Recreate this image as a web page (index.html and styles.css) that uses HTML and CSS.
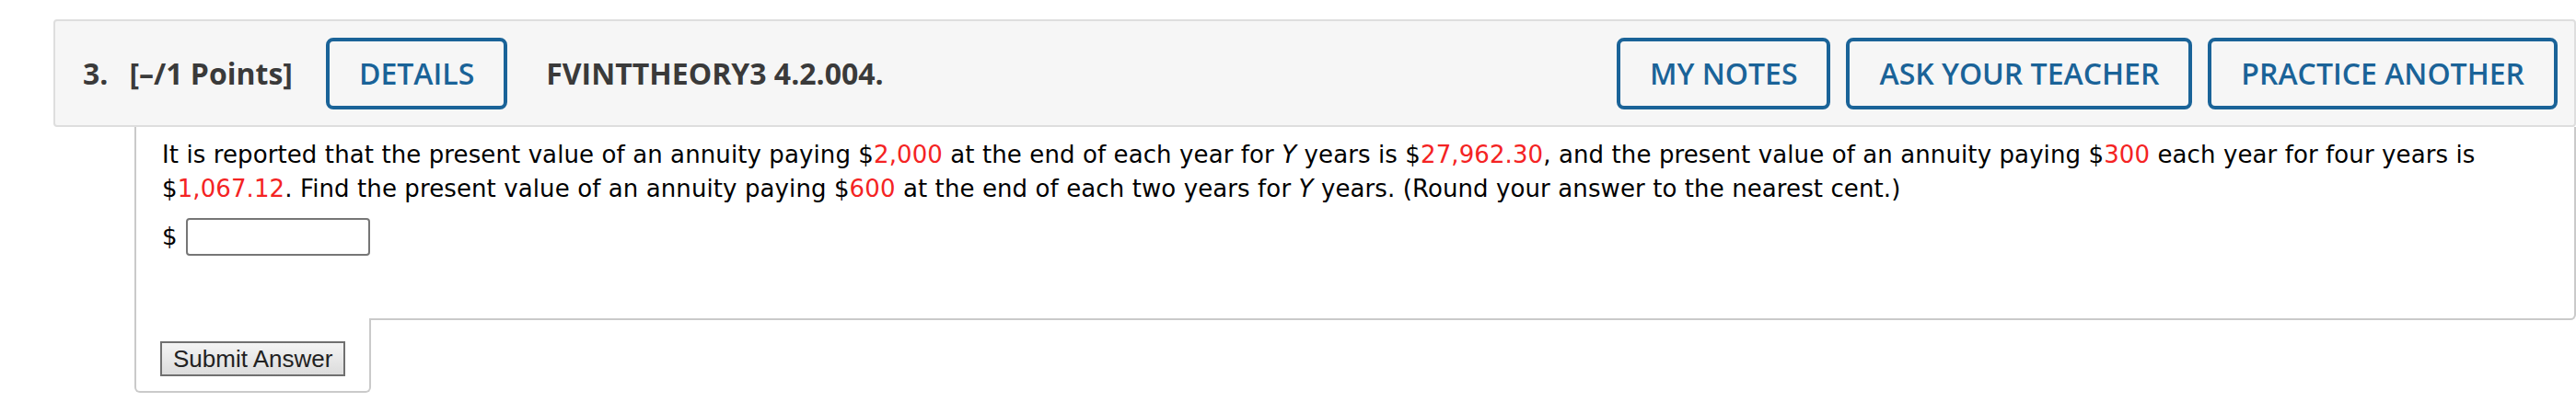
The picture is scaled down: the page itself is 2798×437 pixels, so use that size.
FILE: index.html
```html
<!DOCTYPE html>
<html>
<head>
<meta charset="utf-8">
<link rel="stylesheet" href="styles.css">
</head>
<body>
<div class="page">
  <div class="qhead">
    <span class="qnum">3.</span>
    <span class="qpts">[–/1 Points]</span>
    <button class="hbtn">DETAILS</button>
    <span class="qtitle">FVINTTHEORY3 4.2.004.</span>
    <div class="hright">
      <button class="hbtn">MY NOTES</button>
      <button class="hbtn">ASK YOUR TEACHER</button>
      <button class="hbtn">PRACTICE ANOTHER</button>
    </div>
  </div>
  <div class="qbody">
    <p class="qtext">It is reported that the present value of an annuity paying $<span class="red">2,000</span> at the end of each year for <i>Y</i> years is $<span class="red">27,962.30</span>, and the present value of an annuity paying $<span class="red">300</span> each year for four years is $<span class="red">1,067.12</span>. Find the present value of an annuity paying $<span class="red">600</span> at the end of each two years for <i>Y</i> years. (Round your answer to the nearest cent.)</p>
    <div class="ansrow"><span class="cur">$</span><input class="ans" type="text"></div>
  </div>
  <div class="qfoot"><button class="submit">Submit Answer</button></div>
</div>
</body>
</html>
```
FILE: styles.css
```css
html, body {
  margin: 0;
  padding: 0;
  background: #ffffff;
}
.page {
  padding: 21px 0 0 58px;
}
.qhead {
  display: flex;
  align-items: center;
  height: 117px;
  box-sizing: border-box;
  border: 2px solid #dedede;
  border-radius: 4px;
  background: #f6f6f6;
  padding: 0 18px 0 30px;
  font-family: "Open Sans", sans-serif;
  color: #3a3a3a;
}
.qnum, .qpts, .qtitle {
  font-size: 32px;
  font-weight: 700;
}
.qnum { margin-right: 23px; }
.qpts { margin-right: 36px; }
.qtitle { margin-left: 42px; }
.hbtn {
  height: 78px;
  box-sizing: border-box;
  border: 4px solid #1a6398;
  border-radius: 8px;
  background: transparent;
  color: #1a6398;
  font-family: "Open Sans", sans-serif;
  font-size: 32px;
  font-weight: 600;
  padding: 0 32px;
  margin: 0;
}
.hright {
  margin-left: auto;
  display: flex;
  gap: 17px;
}
.qbody {
  margin-left: 88px;
  border: 2px solid #cacaca;
  border-top: none;
  border-bottom-right-radius: 6px;
  padding: 12px 30px 68px 28px;
  font-family: "DejaVu Sans", Verdana, sans-serif;
  font-size: 26px;
  line-height: 37px;
  letter-spacing: 0.1px;
  color: #000;
}
.qtext {
  margin: 0;
}
.red { color: #f42323; }
.ansrow {
  display: flex;
  align-items: center;
  gap: 9px;
  margin-top: 13px;
}
.ans {
  width: 200px;
  height: 41px;
  box-sizing: border-box;
  border: 2px solid #767676;
  border-radius: 4px;
  margin: 0;
  background: #fff;
}
.qfoot {
  margin-left: 88px;
  margin-top: -2px;
  width: 257px;
  box-sizing: border-box;
  background: #fff;
  border: 2px solid #cacaca;
  border-top: none;
  border-radius: 0 0 6px 6px;
  padding: 25px 0 16px 26px;
}
.submit {
  height: 38px;
  box-sizing: border-box;
  border: 2px solid #707070;
  background: linear-gradient(#f4f4f4, #dcdcdc);
  color: #222;
  font-family: "Liberation Sans", Arial, sans-serif;
  font-size: 26px;
  padding: 0 12px;
  margin: 0;
  border-radius: 0;
}
```
